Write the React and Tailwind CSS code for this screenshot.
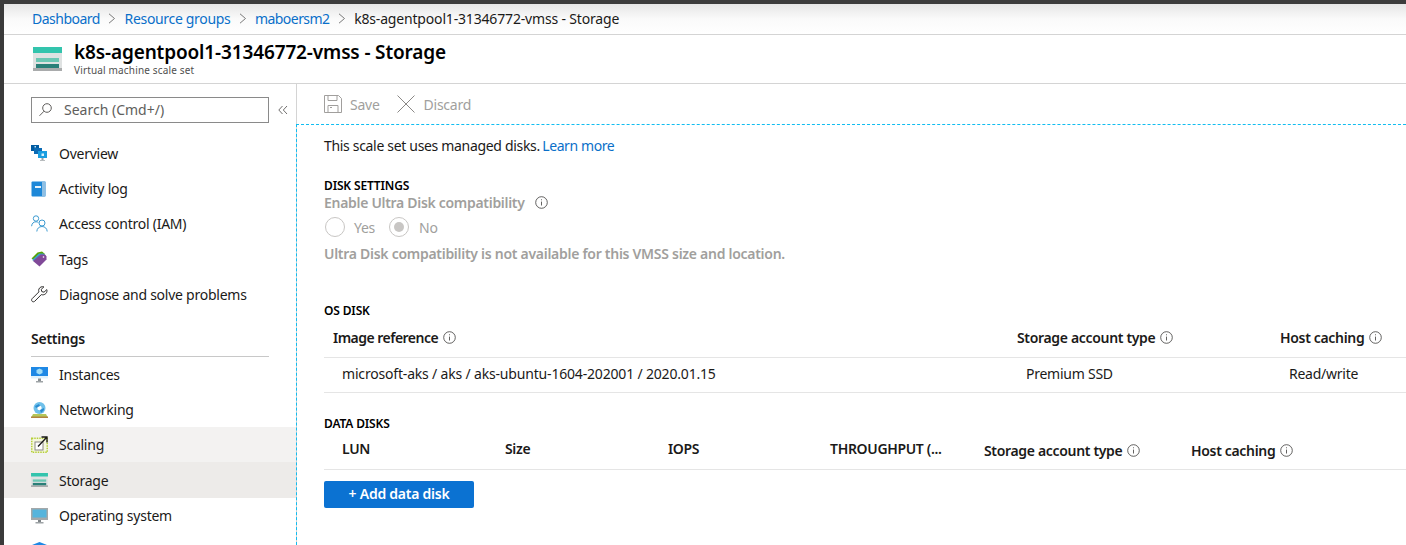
import React from "react";

function Info({ className = "" }) {
  return (
    <svg viewBox="0 0 13 13" className={`w-[13px] h-[13px] shrink-0 ${className}`} fill="none" stroke="#3b3a39" strokeWidth="0.8">
      <circle cx="6.5" cy="6.5" r="5.8" />
      <path d="M6.5 5.6v3.9" />
      <circle cx="6.5" cy="3.8" r="0.5" fill="#3b3a39" stroke="none" />
    </svg>
  );
}

function StorageIcon({ w = 17, h = 14 }) {
  return (
    <svg width={w} height={h} viewBox="0 0 29 24" className="shrink-0">
      <rect x="0" y="0" width="29" height="24" fill="#dfe2e2" />
      <rect x="0" y="21" width="29" height="3" fill="#a9abac" />
      <rect x="0" y="0" width="29" height="6" fill="#33c4ad" />
      <rect x="3" y="11" width="23" height="4" fill="#6cc7b4" />
      <rect x="3" y="17" width="23" height="4" fill="#2a7f78" />
    </svg>
  );
}

const icons = {
  overview: (
    <svg width="17" height="17" viewBox="0 0 17 17">
      <rect x="0" y="0" width="8" height="6" fill="#005ba1" />
      <rect x="3" y="3" width="8" height="6" fill="#0c6bb5" />
      <rect x="7" y="6" width="9" height="7" fill="#1a9ee0" />
      <rect x="3.5" y="1" width="1.5" height="1.5" fill="#bfe4f7" />
      <rect x="10.5" y="8.5" width="2.5" height="2.5" fill="#d9f0fb" />
      <rect x="10.5" y="13" width="2" height="2" fill="#9aa0a3" />
      <rect x="9" y="15" width="5" height="1" fill="#b8bcbe" />
    </svg>
  ),
  log: (
    <svg width="15" height="16" viewBox="0 0 15 16">
      <rect x="0.5" y="0.5" width="14" height="15" rx="1" fill="#1e88d8" />
      <rect x="11" y="0.5" width="3.5" height="15" fill="#8fbfe3" />
      <rect x="4" y="5" width="6" height="2" fill="#e8f3fb" />
    </svg>
  ),
  iam: (
    <svg width="17" height="17" viewBox="0 0 17 17" fill="none" stroke="#3d9bd1" strokeWidth="1">
      <circle cx="5" cy="3.5" r="2.7" />
      <path d="M0.6 11.2c.3-3 2-4.4 4.4-4.4 1 0 1.7.2 2.3.6" />
      <circle cx="11" cy="8" r="3" />
      <path d="M5.8 16.5c.2-3 2.2-5 5.2-5s5 2 5.2 5" />
    </svg>
  ),
  tags: (
    <svg width="16" height="16" viewBox="0 0 16 16">
      <path d="M.5 7.500 6.500 1.500 11 .5l3 2.500-7 8z" fill="#57a300" />
      <path d="M1 9 8 2.500h4.500L15 5l-7 7.500z" fill="#3c9fc9" />
      <path d="M2 10 9.500 3.500H14l1.500 2v3L8.500 15.500z" fill="#804998" />
      <circle cx="12.5" cy="6" r="0.8" fill="#fff" />
    </svg>
  ),
  wrench: (
    <svg width="17" height="17" viewBox="0 0 17 17" fill="none" stroke="#323130" strokeWidth="1">
      <path d="M15.800 3.600 13 6.200l-2.200-.6-.6-2.200L12.900.9c-2-.7-4.200.2-5 2.200-.4 1-.3 2 0 2.800L1.200 12.600c-.8.8-.8 1.900-.1 2.700.8.700 1.900.7 2.700-.1l6.500-6.600c2.500 1 5.700-.9 5.700-3.800 0-.5-.1-.8-.2-1.200z" />
    </svg>
  ),
  instances: (
    <svg width="17" height="16" viewBox="0 0 17 16">
      <rect x="0" y="0" width="17" height="11" fill="#1e88e5" />
      <rect x="0" y="9" width="17" height="2.500" fill="#dff1fb" />
      <path d="M8.500 1.500 11.500 3v3l-3 1.500-3-1.500V3z" fill="#9fdcf7" />
      <rect x="7" y="11.500" width="3" height="2.500" fill="#8b9194" />
      <rect x="5" y="14" width="7" height="1.500" fill="#9ea3a6" />
    </svg>
  ),
  networking: (
    <svg width="17" height="17" viewBox="0 0 17 17">
      <path d="M0 17l2-4h13l2 4z" fill="#b5c75a" />
      <rect x="0" y="15.500" width="17" height="1.500" fill="#b0853f" />
      <circle cx="8.500" cy="7" r="6" fill="#6fc0ea" />
      <circle cx="8.500" cy="7" r="2.200" fill="#fff" />
      <path d="M4 5l4-2 1 2-4 2zM9 9l4-2 0 2-3 3z" fill="#2a8bd0" />
    </svg>
  ),
  scaling: (
    <svg width="17" height="17" viewBox="0 0 17 17" fill="none">
      <rect x="0.750" y="2.250" width="15.500" height="14" stroke="#b6cf3a" strokeWidth="1.500" strokeDasharray="1.500 1" fill="#f4f7dc" />
      <rect x="4" y="6" width="8" height="8" fill="#fff" stroke="#8a8886" />
      <path d="M7 10.500 15.500 1.500M10.500 1h5.500v5.500" stroke="#1b1a19" strokeWidth="1.300" />
    </svg>
  ),
  os: (
    <svg width="17" height="16" viewBox="0 0 17 16">
      <rect x="0" y="0" width="17" height="12" fill="#a3a8aa" />
      <rect x="1.500" y="1.500" width="14" height="8" fill="#55b4dc" />
      <rect x="7" y="12" width="3" height="2" fill="#7e8487" />
      <rect x="4.500" y="14" width="8" height="1.500" fill="#9ea3a6" />
    </svg>
  ),
};

function NavRow({ icon, label, cls = "h-[35.2px]" }) {
  return (
    <div className={`flex items-center pl-[27px] shrink-0 ${cls}`}>
      <span className="w-[28px] flex items-center justify-start">{icon}</span>
      <span>{label}</span>
    </div>
  );
}

function Chev() {
  return (
    <svg width="8" height="11" viewBox="0 0 8 11" fill="none" stroke="#6b6b6b" strokeWidth="0.900" className="mx-[8.3px]">
      <path d="M1 .800 6.500 5.500 1 10.200" />
    </svg>
  );
}

function Section({ children, mt }) {
  return <div className={`${mt} h-[17px] leading-[17px] text-[12px] font-semibold text-black tracking-[-0.15px]`}>{children}</div>;
}

export default function App() {
  return (
    <div
      className="w-[1406px] h-[545px] overflow-hidden bg-[#3a3a3a] flex flex-col text-[#1b1a19] text-[14px] tracking-[-0.25px]"
      style={{ fontFamily: '"Noto Sans", "Open Sans", sans-serif' }}
    >
      <div className="h-[4px] shrink-0 bg-[#3c3c3c]" />
      <div className="flex-1 min-h-0 ml-[4px] bg-white flex flex-col">
        {/* breadcrumb */}
        <div className="h-[31px] shrink-0 flex items-center pl-[28px] pb-[1px] border-b border-[#d4d4d4] bg-gradient-to-b from-[#e6e6e6] via-[#fafafa] to-white">
          <a className="text-[#0a6fc9] tracking-[-0.5px]">Dashboard</a>
          <Chev />
          <a className="text-[#0a6fc9] tracking-[-0.33px]">Resource groups</a>
          <Chev />
          <a className="text-[#0a6fc9] tracking-[-0.55px]">maboersm2</a>
          <Chev />
          <span className="tracking-[-0.17px]">k8s-agentpool1-31346772-vmss - Storage</span>
        </div>
        {/* title */}
        <div className="h-[49px] shrink-0 flex items-center pl-[29px] border-b border-[#d4d4d4]">
          <StorageIcon w={29} h={24} />
          <div className="ml-[12px] flex flex-col -mt-[2px]">
            <div className="text-[19px] font-semibold leading-[24px] text-black tracking-[-0.14px]">k8s-agentpool1-31346772-vmss - Storage</div>
            <div className="text-[10px] leading-[12px] text-[#505050] tracking-[0.16px]">Virtual machine scale set</div>
          </div>
        </div>
        <div className="flex-1 min-h-0 flex">
          {/* sidebar */}
          <div className="w-[292px] shrink-0 flex flex-col overflow-hidden">
            <div className="h-[52px] shrink-0 flex items-center pl-[27px]">
              <div className="w-[238px] h-[26px] border border-[#8a8a8a] flex items-center pl-[6px] pb-[1px] text-[#605e5c]">
                <svg width="15" height="15" viewBox="0 0 15 15" fill="none" stroke="#605e5c" strokeWidth="1" className="mr-[11px]">
                  <circle cx="9" cy="6" r="4.300" />
                  <path d="M6 9.200 1.500 13.800" />
                </svg>
                <span className="tracking-[0px]">Search (Cmd+/)</span>
              </div>
              <svg width="10" height="10" viewBox="0 0 10 10" fill="none" stroke="#605e5c" strokeWidth="0.900" className="ml-[9px]">
                <path d="M4.500 1 .8 5l3.700 4M9 1 5.300 5 9 9" />
              </svg>
            </div>
            <NavRow icon={icons.overview} label="Overview" />
            <NavRow icon={icons.log} label="Activity log" />
            <NavRow icon={icons.iam} label="Access control (IAM)" />
            <NavRow icon={icons.tags} label="Tags" />
            <NavRow icon={icons.wrench} label="Diagnose and solve problems" />
            <div className="ml-[27px] w-[238px] h-[36px] mt-[9px] shrink-0 flex items-center font-semibold border-b border-[#c8c8c8] pt-[1px]">Settings</div>
            <NavRow icon={icons.instances} label="Instances" />
            <NavRow icon={icons.networking} label="Networking" />
            <NavRow icon={icons.scaling} label="Scaling" cls="h-[35px] bg-[#f3f2f1]" />
            <NavRow icon={<StorageIcon />} label="Storage" cls="h-[36px] bg-[#edebe9]" />
            <NavRow icon={icons.os} label="Operating system" />
            <div className="pl-[27px] pt-[8px]">
              <svg width="17" height="10" viewBox="0 0 17 10"><path d="M8.500 0 16 3v7H1V3z" fill="#1e88e5" /></svg>
            </div>
          </div>
          {/* main */}
          <div className="flex-1 min-w-0 flex flex-col border-l border-[#d4d4d4]">
            <div className="h-[40px] shrink-0 flex items-center pl-[27px] text-[#a19f9d]">
              <svg width="18" height="18" viewBox="0 0 18 18" fill="none" stroke="#a19f9d" strokeWidth="1" className="mr-[8px]">
                <path d="M.5.500h14l3 3v14H.500z" />
                <path d="M4 .500v5h9v-5M4 17.500v-7h10v7M6 12.500h2" />
              </svg>
              <span className="mr-[17px]">Save</span>
              <svg width="18" height="18" viewBox="0 0 18 18" fill="none" stroke="#8a8886" strokeWidth="1" className="mr-[9px]">
                <path d="M.5.500l17 17M17.500.500l-17 17" />
              </svg>
              <span>Discard</span>
            </div>
            <div className="flex-1 min-h-0 -ml-[1px] border-l border-t border-dashed border-[#12bdf0] pl-[27px] overflow-hidden">
              <div className="h-[21px] mt-[10px] leading-[21px] tracking-[-0.32px]">
                This scale set uses managed disks. <a className="text-[#0a6fc9] tracking-[-0.4px] -ml-[1px]">Learn more</a>
              </div>
              <Section mt="mt-[21px]">DISK SETTINGS</Section>
              <div className="flex items-center h-[19px] -mt-[1px] font-semibold text-[#a19f9d] tracking-[-0.3px]">
                Enable Ultra Disk compatibility
                <Info className="ml-[10px]" />
              </div>
              <div className="flex items-center h-[28px] mt-[1px] pl-[1px] text-[#a19f9d]">
                <span className="w-[20px] h-[20px] rounded-full border border-[#c8c6c4] mr-[9px] bg-white" />
                <span className="mr-[14px]">Yes</span>
                <span className="w-[20px] h-[20px] rounded-full border border-[#c8c6c4] mr-[10px] flex items-center justify-center">
                  <span className="w-[10px] h-[10px] rounded-full bg-[#c8c6c4]" />
                </span>
                <span>No</span>
              </div>
              <div className="mt-[2px] h-[21px] leading-[21px] font-semibold text-[#a19f9d] tracking-[-0.28px]">
                Ultra Disk compatibility is not available for this VMSS size and location.
              </div>
              <Section mt="mt-[38px]">OS DISK</Section>
              <div className="h-[39px] pb-[2px] grid grid-cols-[693px_263px_1fr] items-center border-b border-[#e5e5e5] font-semibold tracking-[-0.33px]">
                <span className="pl-[9px] flex items-center tracking-[-0.52px]">Image reference<Info className="ml-[5px]" /></span>
                <span className="flex items-center">Storage account type<Info className="ml-[5px]" /></span>
                <span className="flex items-center whitespace-nowrap">Host caching<Info className="ml-[5px]" /></span>
              </div>
              <div className="h-[35px] pb-[3px] grid grid-cols-[693px_263px_1fr] items-center border-b border-[#e5e5e5]">
                <span className="pl-[18px] tracking-[-0.18px]">microsoft-aks / aks / aks-ubuntu-1604-202001 / 2020.01.15</span>
                <span className="pl-[9px]">Premium SSD</span>
                <span className="pl-[9px]">Read/write</span>
              </div>
              <Section mt="mt-[22px]">DATA DISKS</Section>
              <div className="h-[38px] pb-[5px] grid grid-cols-[181px_163px_162px_154px_207px_1fr] items-center border-b border-[#e5e5e5] font-semibold tracking-[-0.33px]">
                <span className="pl-[18px]">LUN</span>
                <span>Size</span>
                <span>IOPS</span>
                <span className="whitespace-nowrap">THROUGHPUT (...</span>
                <span className="flex items-center pt-[4px]">Storage account type<Info className="ml-[5px]" /></span>
                <span className="flex items-center pt-[4px]">Host caching<Info className="ml-[5px]" /></span>
              </div>
              <button className="mt-[11px] w-[150px] h-[27px] pb-[2px] rounded-[2px] bg-[#0b72d2] text-white font-semibold flex items-center justify-center">
                + Add data disk
              </button>
            </div>
          </div>
        </div>
      </div>
    </div>
  );
}
